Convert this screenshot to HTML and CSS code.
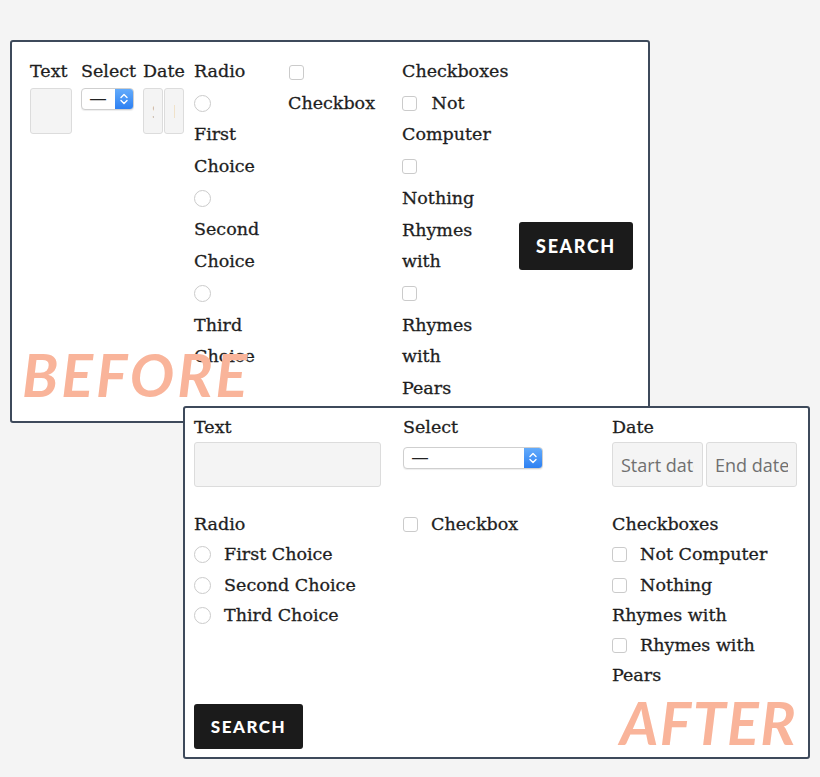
FILE: index.html
```html
<!DOCTYPE html>
<html lang="en">
<head>
<meta charset="utf-8">
<title>Search form — before and after</title>
<link rel="stylesheet" href="styles.css">
</head>
<body>
<div class="stage">
  <section class="panel panel-before">
    <form class="form-before">
      <div class="fld fld-text">
        <div class="lbl">Text</div>
        <input class="txt" type="text">
      </div>
      <div class="fld fld-select">
        <div class="lbl">Select</div>
        <div class="sel">
          <span class="sel-val">—</span>
          <span class="sel-btn"><svg width="18" height="20" viewBox="0 0 18 20"><path d="M6 8.5 9 5.5 12 8.5M6 11.5 9 14.5 12 11.5" fill="none" stroke="#fff" stroke-width="1.4" stroke-linecap="round" stroke-linejoin="round"/></svg></span>
        </div>
      </div>
      <div class="fld fld-date">
        <div class="lbl">Date</div>
        <div class="dates">
          <input class="txt date" type="text" placeholder="Start date">
          <input class="txt date" type="text" placeholder="End date">
        </div>
      </div>
      <div class="fld fld-radio">
        <div class="lbl">Radio</div>
        <label class="opt stack"><input class="rb" type="radio" name="rb1"> First Choice</label>
        <label class="opt stack"><input class="rb" type="radio" name="rb1"> Second Choice</label>
        <label class="opt stack"><input class="rb" type="radio" name="rb1"> Third Choice</label>
      </div>
      <div class="fld fld-check">
        <label class="opt stack"><input class="cb" type="checkbox"> Checkbox</label>
      </div>
      <div class="fld fld-checks">
        <div class="lbl">Checkboxes</div>
        <div class="opts">
          <label class="opt"><input class="cb" type="checkbox"> Not Computer</label>
          <label class="opt"><input class="cb" type="checkbox"> Nothing Rhymes with</label>
          <label class="opt"><input class="cb" type="checkbox"> Rhymes with Pears</label>
        </div>
      </div>
      <button class="btn btn-before" type="button">Search</button>
    </form>
    <div class="mark mark-before">BEFORE</div>
  </section>

  <section class="panel panel-after">
    <form class="form-after">
      <div class="grid">
        <div class="fld">
          <div class="lbl">Text</div>
          <input class="txt txt-wide" type="text">
        </div>
        <div class="fld">
          <div class="lbl">Select</div>
          <div class="sel sel-wide">
            <span class="sel-val">—</span>
            <span class="sel-btn"><svg width="18" height="20" viewBox="0 0 18 20"><path d="M6 8.5 9 5.5 12 8.5M6 11.5 9 14.5 12 11.5" fill="none" stroke="#fff" stroke-width="1.4" stroke-linecap="round" stroke-linejoin="round"/></svg></span>
          </div>
        </div>
        <div class="fld">
          <div class="lbl">Date</div>
          <div class="dates dates-wide">
            <input class="txt date-wide" type="text" placeholder="Start date">
            <input class="txt date-wide" type="text" placeholder="End date">
          </div>
        </div>
        <div class="fld">
          <div class="lbl">Radio</div>
          <label class="opt"><input class="rb" type="radio" name="rb2"> First Choice</label>
          <label class="opt"><input class="rb" type="radio" name="rb2"> Second Choice</label>
          <label class="opt"><input class="rb" type="radio" name="rb2"> Third Choice</label>
        </div>
        <div class="fld">
          <label class="opt"><input class="cb" type="checkbox"> Checkbox</label>
        </div>
        <div class="fld">
          <div class="lbl">Checkboxes</div>
          <div class="opts opts-wide">
            <label class="opt"><input class="cb" type="checkbox"> Not Computer</label>
            <label class="opt"><input class="cb" type="checkbox"> Nothing Rhymes with</label>
            <label class="opt"><input class="cb" type="checkbox"> Rhymes with Pears</label>
          </div>
        </div>
      </div>
      <button class="btn btn-after" type="button">Search</button>
    </form>
    <div class="mark mark-after">AFTER</div>
  </section>
</div>
</body>
</html>
```

FILE: styles.css
```css
* { box-sizing: border-box; }

html, body {
  margin: 0;
  padding: 0;
}

body {
  width: 820px;
  height: 777px;
  overflow: hidden;
  background: #f4f4f4;
  color: #1e1e1e;
  font-family: "DejaVu Serif", "Liberation Serif", serif;
  font-size: 17.5px;
}

.stage {
  position: relative;
  width: 820px;
  height: 777px;
}

.panel {
  position: absolute;
  background: #fff;
  border: 2px solid #3e4a5b;
  border-radius: 3px;
}

.panel-before {
  left: 10px;
  top: 40px;
  width: 640px;
  height: 383px;
  padding: 14px 15px 0 18px;
  z-index: 1;
}

.panel-after {
  left: 183px;
  top: 406px;
  width: 627px;
  height: 353px;
  padding: 4px 10px 0 9px;
  z-index: 2;
}

form { margin: 0; }

.lbl,
.opt {
  -webkit-text-stroke: 0.3px #1e1e1e;
}

.lbl { white-space: nowrap; }

.opt { display: block; }

/* inputs */
.txt {
  display: block;
  margin: 0;
  padding: 0 8px;
  border: 1px solid #dcdcdc;
  border-radius: 3px;
  background: #f4f4f4;
  font-family: "Open Sans", "Liberation Sans", sans-serif;
  font-size: 18px;
  color: #666;
  outline: none;
}

.txt::placeholder { color: #707070; opacity: 1; }

.date::placeholder { color: #b5b5b5; }

.sel {
  display: flex;
  height: 22px;
  border: 1px solid #cfcfcf;
  border-radius: 4px;
  background: #fff;
  box-shadow: 0 1px 1px rgba(0, 0, 0, 0.07);
  overflow: hidden;
}

.sel-val {
  flex: 1;
  padding-left: 8px;
  font-family: "Liberation Sans", sans-serif;
  font-size: 16px;
  line-height: 20px;
  color: #222;
}

.sel-btn {
  width: 18px;
  display: flex;
  align-items: center;
  justify-content: center;
  background: linear-gradient(#63abfb, #2d80f2);
}

.sel-btn svg { display: block; }

.rb, .cb {
  appearance: none;
  -webkit-appearance: none;
  margin: 0;
  background: #fff;
  border: 1px solid #cbcbcb;
  vertical-align: middle;
  position: relative;
  top: -1px;
}

.rb {
  width: 17px;
  height: 17px;
  border-radius: 50%;
}

.cb {
  width: 15px;
  height: 15px;
  border-radius: 3px;
}

.btn {
  border: none;
  border-radius: 3px;
  background: #1b1b1b;
  color: #fff;
  font-family: Lato, "Open Sans", sans-serif;
  font-weight: 900;
  text-transform: uppercase;
  cursor: pointer;
  padding: 0;
}

.mark {
  position: absolute;
  font-family: Lato, "Open Sans", sans-serif;
  font-style: italic;
  font-weight: 700;
  font-size: 59px;
  line-height: 1;
  letter-spacing: 1.5px;
  color: #f9b49a;
  white-space: nowrap;
  pointer-events: none;
}

/* BEFORE */
.form-before {
  display: flex;
  align-items: flex-start;
  gap: 9px;
  line-height: 31.7px;
}

.fld-text { width: 42px; }
.fld-text .txt { width: 42px; height: 46px; }

.fld-select { width: 53px; }

.fld-date { width: 42px; }
.dates { display: flex; gap: 1px; }
.date { width: 20px; height: 46px; }

.fld-radio { width: 85px; }
.fld-check { width: 105px; }
.fld-checks { width: 108px; }

.form-before .opts { width: 92px; }

.form-before .rb,
.form-before .cb { margin-right: 9px; }

.stack .rb,
.stack .cb {
  display: block;
  top: 0;
}

.stack .rb { margin: 7px 0 7.7px; }
.stack .cb { margin: 8.5px 0 8.2px 1px; }

.btn-before {
  flex: 0 0 auto;
  width: 114px;
  height: 48px;
  font-size: 18px;
  letter-spacing: 1.6px;
  align-self: center;
  margin-top: 32px;
}

.mark-before {
  left: 10px;
  top: 303px;
  letter-spacing: 3px;
}

/* AFTER */
.grid {
  display: grid;
  grid-template-columns: 187px 187px 185px;
  column-gap: 22px;
  row-gap: 22px;
  line-height: 30.2px;
}

.txt-wide { width: 187px; height: 45px; }

.sel-wide { width: 140px; margin-top: 5px; }

.dates-wide { gap: 3px; }
.date-wide { width: 91px; height: 45px; }

.form-after .rb,
.form-after .cb { margin-right: 7.5px; }

.opts-wide { width: 165px; }

.btn-after {
  display: block;
  width: 109px;
  height: 45px;
  margin-top: 14px;
  font-size: 17px;
  letter-spacing: 1.5px;
}

.mark-after {
  left: 435px;
  top: 285px;
}
```
